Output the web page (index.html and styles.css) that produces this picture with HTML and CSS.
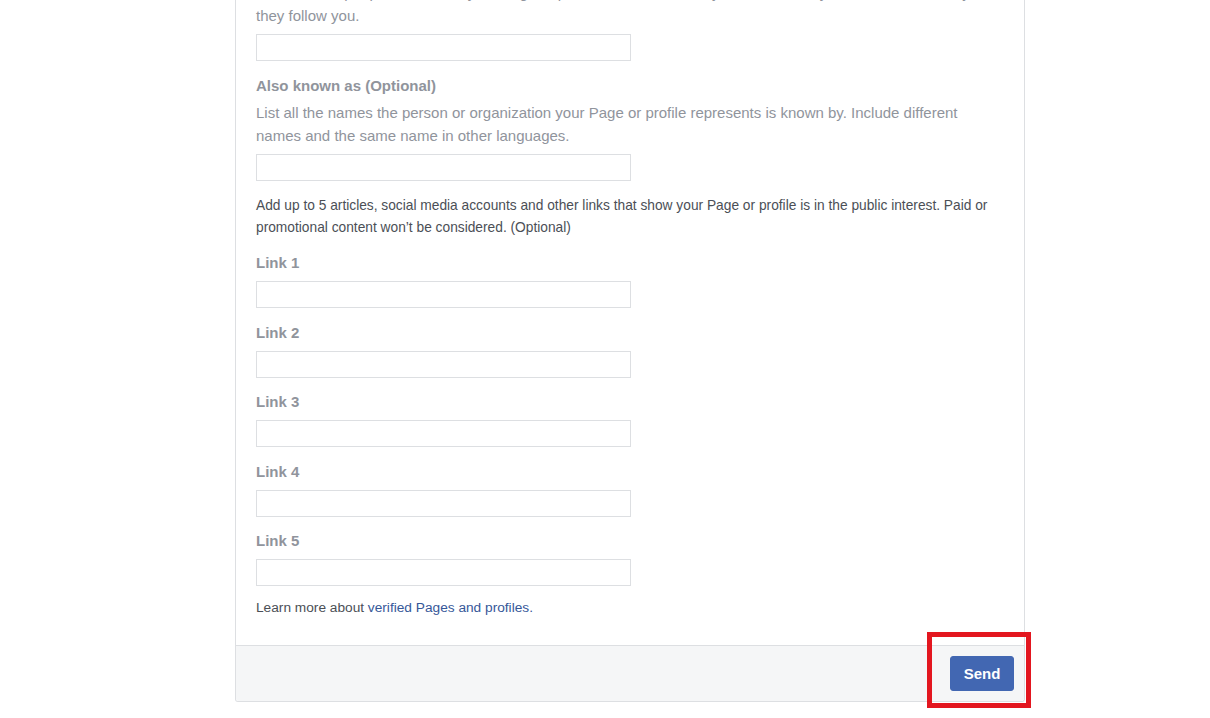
FILE: index.html
```html
<!DOCTYPE html>
<html lang="en">
<head>
<meta charset="utf-8">
<title>Request a verified badge</title>
<link rel="stylesheet" href="styles.css">
</head>
<body>
<div class="card">
  <div class="card-body">
    <p class="hint hint-top">Describe the people who follow your Page or profile. Include who they are, where they are located, and why they
      follow you.</p>
    <input class="field field-first" type="text">

    <div class="label label-aka">Also known as (Optional)</div>
    <p class="hint hint-aka">List all the names the person or organization your Page or profile represents is known by. Include different names and the same name in other languages.</p>
    <input class="field field-first" type="text">

    <p class="note">Add up to 5 articles, social media accounts and other links that show your Page or profile is in the public interest. Paid or promotional content won’t be considered. (Optional)</p>

    <div class="links">
      <div class="link-group">
        <div class="label">Link 1</div>
        <input class="field" type="text">
      </div>
      <div class="link-group">
        <div class="label">Link 2</div>
        <input class="field" type="text">
      </div>
      <div class="link-group">
        <div class="label">Link 3</div>
        <input class="field" type="text">
      </div>
      <div class="link-group">
        <div class="label">Link 4</div>
        <input class="field" type="text">
      </div>
      <div class="link-group">
        <div class="label">Link 5</div>
        <input class="field" type="text">
      </div>
    </div>

    <p class="learn">Learn more about <a href="#">verified Pages and profiles.</a></p>
  </div>
  <div class="card-footer">
    <span class="highlight">
      <button class="send" type="button">Send</button>
    </span>
  </div>
</div>
</body>
</html>
```

FILE: styles.css
```css
* {
  box-sizing: border-box;
}

html, body {
  margin: 0;
  padding: 0;
  background: #ffffff;
  overflow: hidden;
}

body {
  font-family: "Liberation Sans", Arial, Helvetica, sans-serif;
  height: 718px;
}

.card {
  width: 790px;
  margin: -19px 0 0 235px;
  border: 1px solid #dddfe2;
  border-top: none;
  border-radius: 0 0 3px 3px;
  background: #ffffff;
}

.card-body {
  padding: 0 20px 26px 20px;
}

.hint {
  margin: 0;
  color: #90949c;
  font-size: 15px;
  line-height: 23px;
}

.hint-top {
  padding-right: 18px;
}

.field {
  display: block;
  width: 375px;
  height: 27px;
  margin: 7px 0 0 0;
  padding: 0 6px;
  border: 1px solid #dddfe2;
  border-radius: 0;
  background: #ffffff;
  font: inherit;
}

.field-first {
  margin-top: 7px;
}

.label {
  color: #90949c;
  font-size: 15px;
  font-weight: bold;
  line-height: 23px;
}

.label-aka {
  margin-top: 13px;
}

.hint-aka {
  margin-top: 4px;
}

.note {
  margin: 14px 0 0 0;
  color: #4b4f56;
  font-size: 13.75px;
  line-height: 22px;
}

.links {
  display: flex;
  flex-direction: column;
  gap: 12.5px;
  margin-top: 12px;
}

.learn {
  margin: 11px 0 0 0;
  color: #4b4f56;
  font-size: 13.7px;
  line-height: 22px;
}

.learn a {
  color: #365899;
  text-decoration: none;
}

.card-footer {
  display: flex;
  justify-content: flex-end;
  padding: 10px 10px 10px 10px;
  background: #f5f6f7;
  border-top: 1px solid #dddfe2;
  border-radius: 0 0 3px 3px;
}

.highlight {
  position: relative;
  display: block;
}

.highlight::after {
  content: "";
  position: absolute;
  left: -23px;
  right: -17px;
  top: -24px;
  bottom: -17px;
  border: 5px solid #e3161f;
  pointer-events: none;
}

.send {
  display: block;
  width: 64px;
  height: 35px;
  padding: 0;
  border: 1px solid #4267b2;
  border-radius: 3px;
  background: #4267b2;
  color: #ffffff;
  font-family: "Liberation Sans", Arial, Helvetica, sans-serif;
  font-size: 15px;
  font-weight: bold;
  cursor: pointer;
}
```
